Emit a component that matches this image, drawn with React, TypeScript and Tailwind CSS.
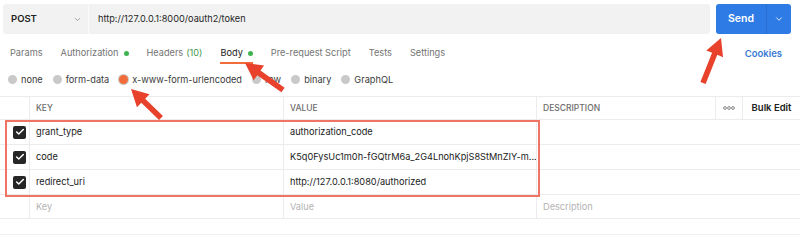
import { ChevronDown, Check } from "lucide-react";

const tabs = [
  { label: "Params" },
  { label: "Authorization", dot: true },
  { label: "Headers", count: "(10)" },
  { label: "Body", dot: true, active: true },
  { label: "Pre-request Script" },
  { label: "Tests" },
  { label: "Settings" },
];

const bodyTypes = ["none", "form-data", "x-www-form-urlencoded", "raw", "binary", "GraphQL"];

const params = [
  { key: "grant_type", value: "authorization_code" },
  { key: "code", value: "K5q0FysUc1m0h-fGQtrM6a_2G4LnohKpjS8StMnZIY-m..." },
  { key: "redirect_uri", value: "http://127.0.0.1:8080/authorized" },
];

// annotation arrow: tip + tail, head drawn as a triangle
function arrowPoints(tx: number, ty: number, sx: number, sy: number) {
  const dx = sx - tx;
  const dy = sy - ty;
  const len = Math.hypot(dx, dy);
  const ux = dx / len;
  const uy = dy / len;
  const px = -uy;
  const py = ux;
  const head = 17;
  const hw = 9;
  const sw = 2.8;
  const bx = tx + ux * head;
  const by = ty + uy * head;
  const pts = [
    [tx, ty],
    [bx + px * hw, by + py * hw],
    [bx + px * sw, by + py * sw],
    [sx + px * sw, sy + py * sw],
    [sx - px * sw, sy - py * sw],
    [bx - px * sw, by - py * sw],
    [bx - px * hw, by - py * hw],
  ];
  return pts.map(p => p.join(",")).join(" ");
}

function Checkbox() {
  return (
    <div className="w-[13px] h-[13px] rounded-[2px] bg-[#262626] flex items-center justify-center">
      <Check className="w-[10px] h-[10px] text-white" strokeWidth={3.5} />
    </div>
  );
}

function MoreDots() {
  return (
    <svg width="12" height="4" viewBox="0 0 12 4" fill="none" stroke="#7a7a7a" strokeWidth="0.9">
      <circle cx="2" cy="2" r="1.4" />
      <circle cx="6" cy="2" r="1.4" />
      <circle cx="10" cy="2" r="1.4" />
    </svg>
  );
}

export default function App() {
  return (
    <div
      className="relative w-[800px] h-[237px] bg-white overflow-hidden text-[#212121]"
      style={{ fontFamily: "Inter, 'Noto Sans', sans-serif" }}
    >
      {/* URL bar */}
      <div className="flex pl-[3px] pr-[9px] pt-[4px] gap-[6px]">
        <div className="flex-1 h-[30px] flex bg-[#f2f2f2] rounded-[3px]">
          <div className="w-[86px] flex items-center justify-between pl-[8px] pr-[6px] border-r border-[#fafafa]">
            <span className="text-[9.5px] font-semibold">POST</span>
            <ChevronDown className="w-[9px] h-[9px] text-[#8a8a8a]" />
          </div>
          <div className="flex items-center pl-[9px] text-[9.2px] text-[#262626]">
            http://127.0.0.1:8000/oauth2/token
          </div>
        </div>
        <div className="w-[75px] h-[30px] flex rounded-[3px] bg-[#2f7be6] text-white">
          <div className="flex-1 flex items-center justify-center text-[10.5px] font-semibold border-r border-[#2a6fd0]">
            Send
          </div>
          <div className="w-[24px] flex items-center justify-center">
            <ChevronDown className="w-[10px] h-[10px]" />
          </div>
        </div>
      </div>

      {/* Request tabs */}
      <div className="flex items-center h-[22px] pl-[10px] pr-[18px] mt-[8px]">
        <div className="flex gap-[18px] h-full">
          {tabs.map(t => (
            <div
              key={t.label}
              className={`flex items-center h-full gap-[5px] text-[9.2px] border-b-2 pt-[2px] ${
                t.active ? "border-[#f26b3a] text-[#212121]" : "border-transparent text-[#737373]"
              }`}
            >
              <span>
                {t.label}
                {t.count && <span className="text-[#3c9a4a] ml-[3px]">{t.count}</span>}
              </span>
              {t.dot && <span className="w-[5px] h-[5px] rounded-full bg-[#3fb34f]" />}
            </div>
          ))}
        </div>
        <div className="ml-auto text-[9.5px] font-semibold text-[#3a7bd5] pt-[2px]">Cookies</div>
      </div>

      {/* Body types */}
      <div className="flex items-center h-[32px] pl-[8px] gap-[10px] text-[9.2px] text-[#3a3a3a]">
        {bodyTypes.map(b => (
          <div key={b} className="flex items-center gap-[4px]">
            <span
              className={`w-[9px] h-[9px] rounded-full ${
                b === "x-www-form-urlencoded" ? "bg-[#f26b3a] ring-1 ring-[#c9c9c9]" : "bg-[#c9c9c9]"
              }`}
            />
            <span>{b}</span>
          </div>
        ))}
      </div>

      {/* Params table */}
      <div className="grid grid-cols-[30px_254px_253px_179px_27px_1fr] text-[9.2px]">
        <div className="h-[24px] border-y border-r border-[#ececec]" />
        <div className="h-[24px] border-y border-r border-[#ececec] flex items-center pl-[6px] text-[8.5px] font-medium text-[#6b6b6b]">KEY</div>
        <div className="h-[24px] border-y border-r border-[#ececec] flex items-center pl-[6px] text-[8.5px] font-medium text-[#6b6b6b]">VALUE</div>
        <div className="h-[24px] border-y border-r border-[#ececec] flex items-center pl-[6px] text-[8.5px] font-medium text-[#6b6b6b]">DESCRIPTION</div>
        <div className="h-[24px] border-y border-r border-[#ececec] flex items-center justify-center">
          <MoreDots />
        </div>
        <div className="h-[24px] border-y border-[#ececec] flex items-center justify-center text-[9.5px] font-semibold">Bulk Edit</div>

        {params.map(p => (
          <div key={p.key} className="contents">
            <div className="h-[25px] border-b border-r border-[#ececec] flex items-center justify-end pr-[3px]">
              <Checkbox />
            </div>
            <div className="h-[25px] border-b border-r border-[#ececec] flex items-center pl-[6px]">{p.key}</div>
            <div className="h-[25px] border-b border-r border-[#ececec] flex items-center pl-[6px] whitespace-nowrap overflow-hidden">{p.value}</div>
            <div className="col-span-3 h-[25px] border-b border-[#ececec]" />
          </div>
        ))}

        <div className="h-[24px] border-b border-r border-[#ececec]" />
        <div className="h-[24px] border-b border-r border-[#ececec] flex items-center pl-[6px] text-[#b3b3b3]">Key</div>
        <div className="h-[24px] border-b border-r border-[#ececec] flex items-center pl-[6px] text-[#b3b3b3]">Value</div>
        <div className="col-span-3 h-[24px] border-b border-[#ececec] flex items-center pl-[6px] text-[#b3b3b3]">Description</div>
        <div className="col-span-6 h-[16px] border-b border-[#f2f2f2]" />
      </div>

      {/* annotations */}
      <div className="absolute left-[5px] top-[120px] w-[535px] h-[77px] border-2 border-[#ef7463] pointer-events-none" />
      <svg className="absolute inset-0 pointer-events-none" width="800" height="237" viewBox="0 0 800 237">
        <polygon points={arrowPoints(245, 63, 283, 90)} fill="#e8412c" />
        <polygon points={arrowPoints(131, 89, 161, 118)} fill="#e8412c" />
        <polygon points={arrowPoints(721, 38, 703, 83)} fill="#e8412c" />
      </svg>
    </div>
  );
}
